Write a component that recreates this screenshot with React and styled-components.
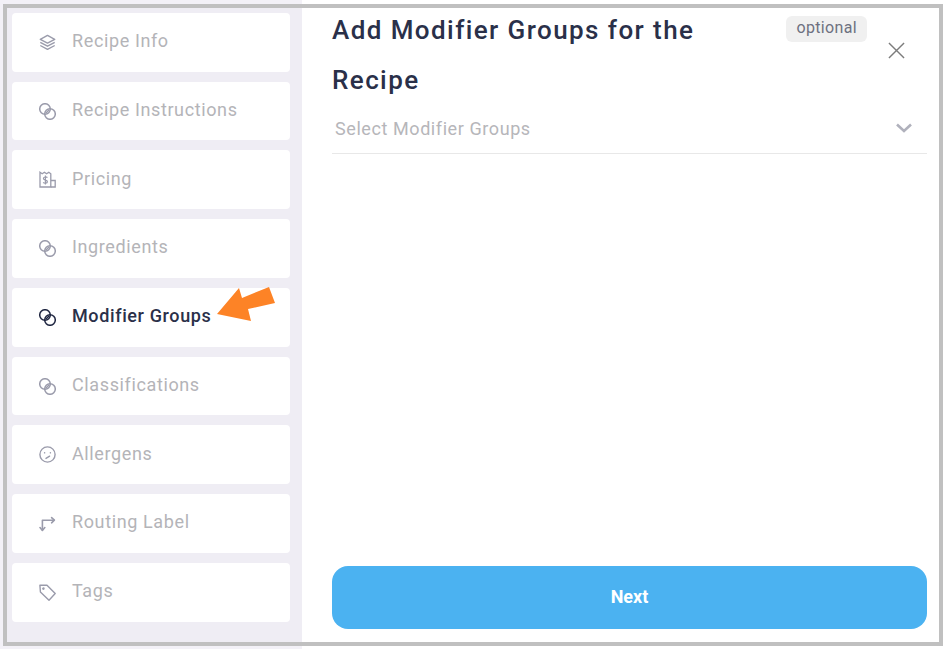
import styled, { createGlobalStyle } from "styled-components"

const GlobalStyle = createGlobalStyle`
    html, body {
        margin: 0;
        padding: 0;
    }
    body {
        font-family: "Roboto", "Liberation Sans", sans-serif;
        background: linear-gradient(90deg, #f3f1f7 302px, #ffffff 302px);
    }
`

const Layers = () => (
    <svg viewBox="0 0 17 17" width="17" height="17" fill="none" stroke="currentColor" strokeWidth="1.4" strokeLinejoin="round">
        <path d="M8.5 1.4 15.7 5.3 8.5 9.1 1.3 5.3Z" />
        <path d="M1.3 8.4 8.5 12.2 15.7 8.4" />
        <path d="M1.3 11.5 8.5 15.4 15.7 11.5" />
    </svg>
)

const Rings = () => (
    <svg viewBox="0 0 17 17" width="17" height="17" fill="none" stroke="currentColor" strokeWidth="1.5">
        <circle cx="6" cy="6" r="5.3" />
        <circle cx="11" cy="11" r="5.3" />
        <path d="M6.8 10.2 10.2 6.8" strokeWidth="1.3" />
    </svg>
)

const Receipt = () => (
    <svg viewBox="0 0 17 17" width="17" height="17" fill="none" stroke="currentColor" strokeWidth="1.3">
        <path d="M1 1.2 3.2 2.8 5.4 1.2 7.6 2.8 9.8 1.2 11.8 2.8V16H1Z" />
        <path d="M11.8 9.5H16.2V16H11.8" />
        <path d="M8.4 6.6C7.6 5.6 4.4 5.7 4.4 7.6 4.4 9.6 8.4 8.6 8.4 10.7 8.4 12.6 5 12.5 4.2 11.4M6.4 4.6V13.6" strokeWidth="1.2" />
    </svg>
)

const Face = () => (
    <svg viewBox="0 0 17 17" width="17" height="17" fill="none" stroke="currentColor" strokeWidth="1.4" strokeLinecap="round">
        <circle cx="8.5" cy="8.5" r="7.6" />
        <path d="M5.6 6.6V6.9M11.4 6.6V6.9M7 12.4 10.6 10.2" />
    </svg>
)

const Routing = () => (
    <svg viewBox="0 0 17 17" width="17" height="17" fill="none" stroke="currentColor" strokeWidth="1.6" strokeLinecap="round" strokeLinejoin="round">
        <path d="M3.4 15V5.2H15" />
        <path d="M12.6 2.6 15.4 5.2 12.6 7.8" />
        <path d="M1 12.6 3.4 15.4 5.8 12.6" />
    </svg>
)

const Tag = () => (
    <svg viewBox="0 0 17 17" width="17" height="17" fill="none" stroke="currentColor" strokeWidth="1.4" strokeLinejoin="round">
        <path d="M0.9 1.2H8L16.2 9.6 10 16.2 1.4 8Z" />
        <circle cx="4.4" cy="4.6" r="0.6" />
    </svg>
)

const steps = [
    { label: "Recipe Info", icon: <Layers /> },
    { label: "Recipe Instructions", icon: <Rings /> },
    { label: "Pricing", icon: <Receipt /> },
    { label: "Ingredients", icon: <Rings /> },
    { label: "Modifier Groups", icon: <Rings />, active: true },
    { label: "Classifications", icon: <Rings /> },
    { label: "Allergens", icon: <Face /> },
    { label: "Routing Label", icon: <Routing /> },
    { label: "Tags", icon: <Tag /> },
]

export default function App() {
    return (
        <>
            <GlobalStyle />
            <Frame>
                <Sidebar>
                    {steps.map((step) => (
                        <StepCard key={step.label} $active={step.active}>
                            <StepIcon $active={step.active}>{step.icon}</StepIcon>
                            <StepLabel $active={step.active}>{step.label}</StepLabel>
                            {step.active && (
                                <Arrow viewBox="0 0 58 40" width="58" height="40">
                                    <path d="M0 29 22 3 25 13 52 2 58 18 31 24 34 36Z" fill="#fd8326" />
                                </Arrow>
                            )}
                        </StepCard>
                    ))}
                </Sidebar>
                <Main>
                    <Header>
                        <Title>Add Modifier Groups for the Recipe</Title>
                        <Chip>optional</Chip>
                        <Close aria-label="Close">
                            <svg viewBox="0 0 18 18" width="17" height="17" fill="none" stroke="#7c7c7c" strokeWidth="1.5">
                                <path d="M1 1 17 17M17 1 1 17" />
                            </svg>
                        </Close>
                    </Header>
                    <SelectRow>
                        <Placeholder>Select Modifier Groups</Placeholder>
                        <svg viewBox="0 0 16 10" width="16" height="10" fill="none" stroke="#b0b1bc" strokeWidth="2.6">
                            <path d="M1 1.5 8 8 15 1.5" />
                        </svg>
                    </SelectRow>
                    <NextButton>Next</NextButton>
                </Main>
            </Frame>
        </>
    )
}

const Frame = styled.div`
    display: flex;
    box-sizing: border-box;
    width: 940px;
    height: 642px;
    margin: 4px 0 0 3px;
    border: 4px solid #c0c0c0;
    overflow: hidden;
`

const Sidebar = styled.div`
    display: grid;
    grid-auto-rows: 58.75px;
    gap: 10px;
    box-sizing: border-box;
    width: 295px;
    flex-shrink: 0;
    padding: 4.9px 12px 0 5px;
    background-color: #efedf4;
`

const StepCard = styled.div`
    position: relative;
    display: flex;
    align-items: center;
    gap: 16px;
    padding-left: 27px;
    background-color: #ffffff;
    border-radius: 4px;
`

const StepIcon = styled.span`
    display: flex;
    color: ${(props) => (props.$active ? "#1f2641" : "#9a9bab")};
`

const StepLabel = styled.span`
    margin-top: -3.5px;
    font-size: 18px;
    font-weight: ${(props) => (props.$active ? 500 : 400)};
    letter-spacing: 0.62px;
    color: ${(props) => (props.$active ? "#2a3049" : "#b4b4b8")};
`

const Arrow = styled.svg`
    position: absolute;
    left: 205px;
    top: -3px;
`

const Main = styled.div`
    display: flex;
    flex-direction: column;
    flex: 1;
    box-sizing: border-box;
    padding: 0 12px 13px 30px;
    background-color: #ffffff;
`

const Header = styled.div`
    display: flex;
    align-items: flex-start;
    margin-top: -3px;
`

const Title = styled.h2`
    width: 430px;
    margin: 0;
    font-size: 26px;
    font-weight: 500;
    line-height: 50px;
    letter-spacing: 1.42px;
    color: #2a3049;
`

const Chip = styled.span`
    margin: 11px 0 0 auto;
    padding: 0 10px;
    height: 26px;
    line-height: 23px;
    font-size: 16px;
    letter-spacing: 0.35px;
    color: #6d7080;
    background-color: #f0f0f0;
    border-radius: 6px;
`

const Close = styled.button`
    display: flex;
    margin: 37px 22px 0 21px;
    padding: 0;
    background: none;
    border: none;
`

const SelectRow = styled.div`
    display: flex;
    align-items: center;
    justify-content: space-between;
    box-sizing: border-box;
    height: 49px;
    padding: 0 15px 2px 3px;
    border-bottom: 1px solid #e8e8e8;
`

const Placeholder = styled.span`
    font-size: 18px;
    letter-spacing: 0.58px;
    color: #b6b6ba;
`

const NextButton = styled.button`
    height: 63px;
    margin-top: auto;
    padding: 0 0 2px;
    font-family: inherit;
    font-size: 18px;
    font-weight: 700;
    color: #ffffff;
    background-color: #4bb2f1;
    border: none;
    border-radius: 16px;
`
